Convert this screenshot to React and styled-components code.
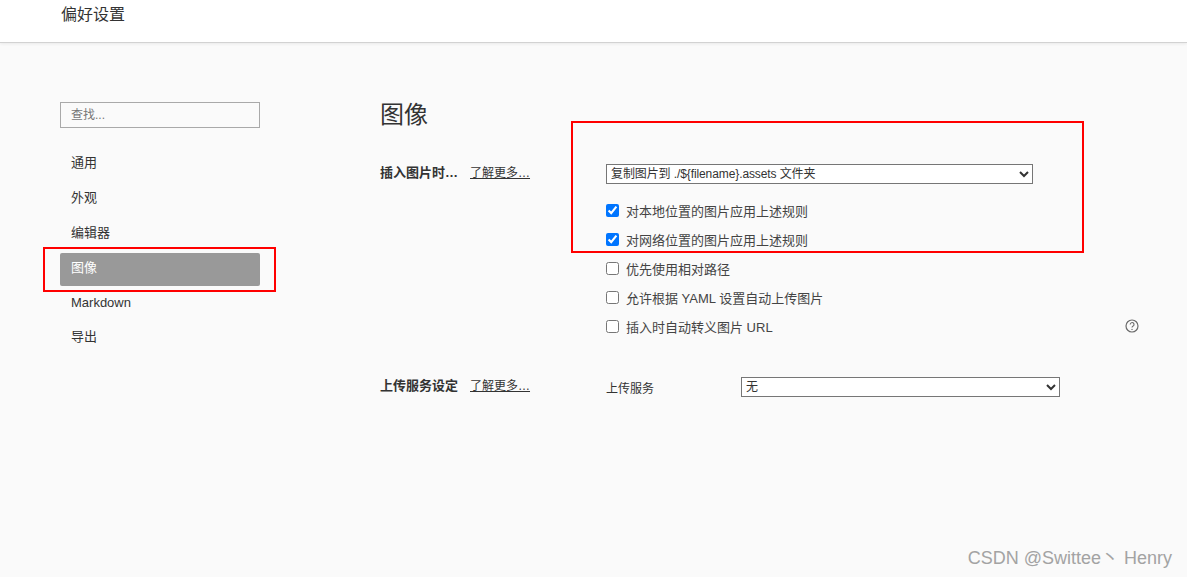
import React from 'react';
import styled, { createGlobalStyle } from 'styled-components';

const cjkFont = '"Liberation Sans", "Noto Sans CJK SC", sans-serif';

const navItems = ['通用', '外观', '编辑器', '图像', 'Markdown', '导出'];

const insertOptions = [
  { label: '对本地位置的图片应用上述规则', checked: true },
  { label: '对网络位置的图片应用上述规则', checked: true },
  { label: '优先使用相对路径', checked: false },
  { label: '允许根据 YAML 设置自动上传图片', checked: false },
  { label: '插入时自动转义图片 URL', checked: false },
];

const GlobalStyle = createGlobalStyle`
  html, body {
    height: 100%;
    margin: 0;
    background-color: #fafafa;
    font-family: ${cjkFont};
    overflow: hidden;
  }
`;

const Page = styled.div`
  position: relative;
  height: 577px;
  display: flex;
  flex-direction: column;
  color: #333;
`;

const Header = styled.header`
  height: 42px;
  box-sizing: content-box;
  background: #fff;
  border-bottom: 1px solid #d2d2d2;
  box-shadow: 0 1px 3px rgba(0, 0, 0, 0.07);
  padding-left: 61px;
  font-size: 16px;
  line-height: 30px;
  color: #333;
`;

const Body = styled.div`
  display: flex;
  padding-top: 59px;
`;

const Sidebar = styled.aside`
  width: 200px;
  margin-left: 60px;
  flex-shrink: 0;
`;

const SearchBox = styled.input`
  display: block;
  box-sizing: border-box;
  width: 200px;
  height: 26px;
  padding: 0 10px;
  margin-bottom: 20px;
  border: 1px solid #a9a9a9;
  border-radius: 0;
  background: transparent;
  font-family: ${cjkFont};
  font-size: 12px;

  &::placeholder {
    color: #777;
    opacity: 1;
  }
`;

const NavList = styled.nav`
  display: flex;
  flex-direction: column;
  gap: 1.9px;
`;

const NavItem = styled.div`
  height: 33px;
  line-height: 30px;
  padding-left: 11px;
  font-size: 13px;
  border-radius: 2px;
  color: ${({ $active }) => ($active ? '#fff' : '#333')};
  background: ${({ $active }) => ($active ? '#999' : 'transparent')};
`;

const Content = styled.main`
  margin-left: 120px;
  width: 760px;
`;

const PageTitle = styled.h1`
  margin: -2px 0 0;
  font-size: 24px;
  font-weight: 400;
  line-height: 30px;
  color: #333;
`;

const SettingRow = styled.section`
  display: flex;
  margin-top: ${({ $top }) => $top}px;
`;

const RowLabel = styled.div`
  width: 226px;
  flex-shrink: 0;
  display: flex;
  font-size: 13px;
  line-height: 18px;
`;

const LabelText = styled.span`
  width: 90px;
  font-weight: 700;
  color: #333;
`;

const LearnMore = styled.a`
  color: #333;
  font-size: 12px;
  text-decoration: underline;
`;

const Controls = styled.div`
  display: flex;
  flex-direction: column;
  flex: 1;
`;

const SelectBox = styled.select`
  box-sizing: border-box;
  width: ${({ $width }) => $width}px;
  height: 20px;
  padding: 0;
  border: 1px solid #767676;
  border-radius: 0;
  background: #fff;
  color: #333;
  font-family: ${cjkFont};
  font-size: 12px;
  letter-spacing: -0.1px;
`;

const OptionList = styled.div`
  display: flex;
  flex-direction: column;
  gap: 11px;
  margin-top: 17px;
`;

const OptionRow = styled.label`
  display: flex;
  align-items: center;
  height: 18px;
  font-size: 13px;
  color: #444;
`;

const CheckBox = styled.input`
  width: 13px;
  height: 13px;
  margin: 0 7px 0 0;
  accent-color: #0075ff;
`;

const ServiceLine = styled.div`
  display: flex;
  align-items: center;
`;

const ServiceName = styled.span`
  width: 135px;
  font-size: 12px;
  color: #333;
`;

const HelpIcon = styled.svg`
  position: absolute;
  left: 1125px;
  top: 319px;
  width: 14px;
  height: 14px;
`;

/* red annotation boxes drawn over the screenshot */
const Annotation = styled.div`
  position: absolute;
  left: ${({ $x }) => $x}px;
  top: ${({ $y }) => $y}px;
  width: ${({ $w }) => $w}px;
  height: ${({ $h }) => $h}px;
  box-sizing: border-box;
  border: 2px solid #f00;
  pointer-events: none;
`;

const Watermark = styled.div`
  position: absolute;
  right: 15px;
  top: 547px;
  font-size: 18px;
  line-height: 22px;
  color: #a3a3a3;
  white-space: nowrap;
`;

const App = () => {
  return (
    <>
      <GlobalStyle />
      <Page>
        <Header>偏好设置</Header>
        <Body>
          <Sidebar>
            <SearchBox placeholder="查找..." readOnly />
            <NavList>
              {navItems.map((item) => (
                <NavItem key={item} $active={item === '图像'}>{item}</NavItem>
              ))}
            </NavList>
          </Sidebar>
          <Content>
            <PageTitle>图像</PageTitle>
            <SettingRow $top={34}>
              <RowLabel>
                <LabelText>插入图片时…</LabelText>
                <LearnMore>了解更多…</LearnMore>
              </RowLabel>
              <Controls>
                <SelectBox $width={427} defaultValue="copy">
                  <option value="copy">复制图片到 ./${'{filename}'}.assets 文件夹</option>
                </SelectBox>
                <OptionList>
                  {insertOptions.map((option) => (
                    <OptionRow key={option.label}>
                      <CheckBox type="checkbox" defaultChecked={option.checked} />
                      {option.label}
                    </OptionRow>
                  ))}
                </OptionList>
              </Controls>
            </SettingRow>
            <SettingRow $top={42}>
              <RowLabel>
                <LabelText>上传服务设定</LabelText>
                <LearnMore>了解更多…</LearnMore>
              </RowLabel>
              <Controls>
                <ServiceLine>
                  <ServiceName>上传服务</ServiceName>
                  <SelectBox $width={319} defaultValue="none">
                    <option value="none">无</option>
                  </SelectBox>
                </ServiceLine>
              </Controls>
            </SettingRow>
          </Content>
        </Body>
        <HelpIcon viewBox="0 0 14 14" fill="none">
          <circle cx="7" cy="7" r="6" stroke="#6a6a6a" strokeWidth="1.2" />
          <path d="M5.2 5.5a1.9 1.9 0 1 1 2.9 1.6c-.7.4-1.1.8-1.1 1.5" stroke="#6a6a6a" strokeWidth="1.1" />
          <circle cx="7" cy="10.4" r=".7" fill="#6a6a6a" />
        </HelpIcon>
        <Annotation $x={571} $y={121} $w={513} $h={132} />
        <Annotation $x={43} $y={247} $w={233} $h={45} />
        <Watermark>CSDN @Swittee丶 Henry</Watermark>
      </Page>
    </>
  );
};

export default App;
